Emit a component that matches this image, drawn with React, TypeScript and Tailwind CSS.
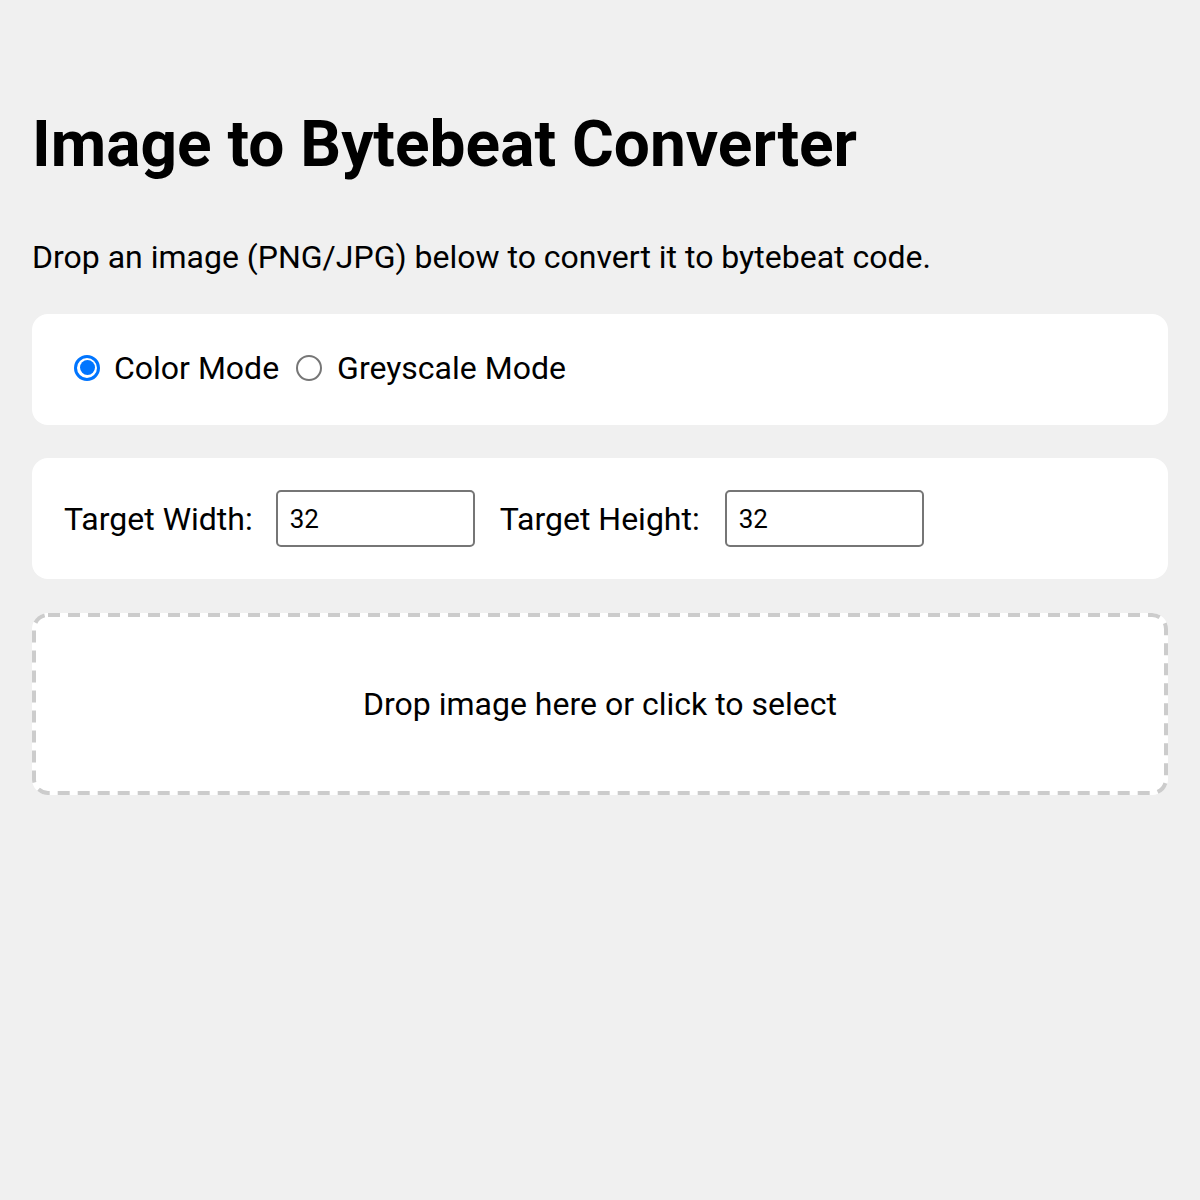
import React from "react";

function Radio({ checked, label, first }: { checked: boolean; label: string; first?: boolean }) {
  return (
    <label className="flex items-center">
      {checked ? (
        <span
          className={
            (first ? "ml-[10px] " : "ml-[17px] ") +
            "mr-[14px] flex h-[26px] w-[26px] items-center justify-center rounded-full border-[3px] border-[#0075ff] bg-white"
          }
        >
          <span className="h-[15px] w-[15px] rounded-full bg-[#0075ff]" />
        </span>
      ) : (
        <span
          className={
            (first ? "ml-[10px] " : "ml-[17px] ") +
            "mr-[15px] h-[26px] w-[26px] rounded-full border-[2px] border-[#767676] bg-white"
          }
        />
      )}
      <span>{label}</span>
    </label>
  );
}

function SizeField({ label, wide }: { label: string; wide?: boolean }) {
  return (
    <div className="flex items-center">
      <span className={wide ? "mr-[25px]" : "mr-[23px]"}>{label}</span>
      <input
        type="number"
        defaultValue={32}
        className="h-[57px] w-[199px] rounded-[5px] border-[2px] border-[#767676] bg-white px-[12px] text-[26px] text-black outline-none [appearance:textfield]"
      />
    </div>
  );
}

export default function App() {
  return (
    <div
      className="min-h-[1200px] bg-[#f0f0f0] px-[32px] pt-[107px] text-black"
      style={{ fontFamily: "Roboto, 'Liberation Sans', sans-serif" }}
    >
      <h1 className="text-[64px] font-bold leading-[75px]">Image to Bytebeat Converter</h1>
      <p className="mt-[57px] text-[32px] leading-[37px]">
        Drop an image (PNG/JPG) below to convert it to bytebeat code.
      </p>

      <div className="mt-[38px] flex h-[111px] items-center rounded-[16px] bg-white px-[32px] pb-[4px] text-[32px]">
        <Radio checked first label="Color Mode" />
        <Radio checked={false} label="Greyscale Mode" />
      </div>

      <div className="mt-[33px] flex h-[121px] items-center gap-[25px] rounded-[16px] bg-white px-[32px] text-[32px]">
        <SizeField label="Target Width:" />
        <SizeField label="Target Height:" wide />
      </div>

      <div className="relative mt-[34px] flex h-[182px] cursor-pointer items-center justify-center rounded-[16px] bg-white text-[32px]">
        <svg className="pointer-events-none absolute inset-0 h-full w-full" xmlns="http://www.w3.org/2000/svg">
          <rect
            x="2"
            y="2"
            width="calc(100% - 4px)"
            height="calc(100% - 4px)"
            rx="14"
            ry="14"
            fill="none"
            stroke="#cccccc"
            strokeWidth="4"
            strokeDasharray="12 8"
          />
        </svg>
        <span className="relative">Drop image here or click to select</span>
      </div>
    </div>
  );
}
